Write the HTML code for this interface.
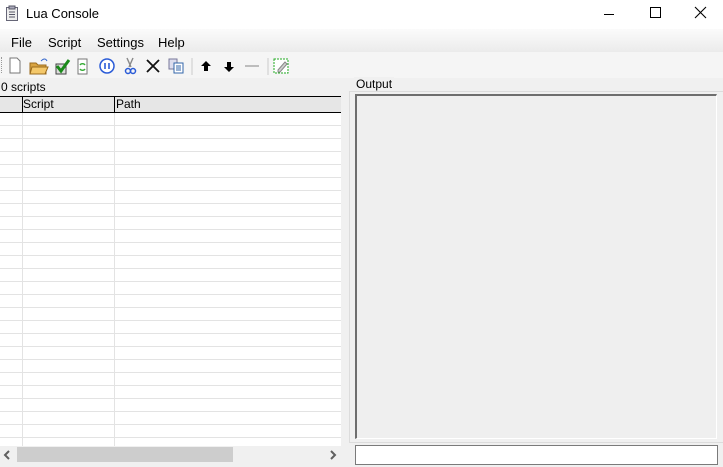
<!DOCTYPE html>
<html><head><meta charset="utf-8"><style>
*{margin:0;padding:0;box-sizing:border-box}
body{width:723px;height:467px;overflow:hidden;background:#f0f0f0;font-family:"Liberation Sans",Arial,sans-serif;font-size:12px;color:#000;position:relative}
.a{position:absolute}
</style></head><body>
<div class="a" style="left:0;top:0;width:723px;height:29px;background:#fff"></div>
<svg class="a" style="left:5px;top:5px" width="14" height="17" viewBox="0 0 14 17"><rect x="1.5" y="2.5" width="11" height="13" fill="#eee" stroke="#667"/><rect x="4" y="1" width="6" height="3" fill="#aab" stroke="#556"/><path d="M4 7h6M4 9.5h6M4 12h6" stroke="#556"/></svg>
<div class="a" style="left:26px;top:6px;font-size:13px">Lua Console</div>
<div class="a" style="left:604px;top:14px;width:10px;height:1px;background:#000"></div>
<div class="a" style="left:650px;top:7px;width:11px;height:11px;border:1px solid #000"></div>
<svg class="a" style="left:694px;top:6px" width="13" height="13"><path d="M1 1L12 12M12 1L1 12" stroke="#000" stroke-width="1.1"/></svg>
<div class="a" style="left:0;top:29px;width:723px;height:23px;background:linear-gradient(#fbfbfb,#f3f3f3 50%,#ebebeb)"></div>
<div class="a" style="left:11px;top:35px;font-size:13px">File</div>
<div class="a" style="left:48px;top:35px;font-size:13px">Script</div>
<div class="a" style="left:97px;top:35px;font-size:13px">Settings</div>
<div class="a" style="left:158px;top:35px;font-size:13px">Help</div>
<div class="a" style="left:0;top:52px;width:723px;height:26px;background:#f5f5f5"></div>
<div class="a" style="left:1px;top:57px;width:1px;height:16px;border-left:1px dotted #999"></div>
<svg class="a" style="left:0;top:55px" width="300" height="22" viewBox="0 0 300 22">
<path d="M10 3h7l3 3v12H10z" fill="#fff" stroke="#777"/>
<path d="M30 8h6l2 2h8v9H30z" fill="#d9a441" stroke="#9a6b1e"/><path d="M32 12h16l-3 7H30z" fill="#f4c86a" stroke="#9a6b1e"/><path d="M41 6q4-4 6 0" stroke="#36c" fill="none"/>
<rect x="56" y="9" width="10" height="10" fill="#ddd" stroke="#444"/><path d="M57 11l4 5 8-11" stroke="#1a8a1a" stroke-width="3" fill="none"/>
<path d="M79 4h8v15h-9V4z" fill="#fff" stroke="#777"/><path d="M80 10a3 3 0 0 1 5 0M85 14a3 3 0 0 1-5 0" stroke="#3a3" fill="none" stroke-width="1.4"/>
<circle cx="107" cy="11" r="7" fill="#fff" stroke="#2a5bd7" stroke-width="1.5"/><path d="M105 8v6M109 8v6" stroke="#2a5bd7" stroke-width="1.6"/>
<path d="M127 3l4 9M133 3l-4 9" stroke="#888" stroke-width="1.4"/><circle cx="128" cy="16" r="2.5" fill="none" stroke="#2a5bd7" stroke-width="1.5"/><circle cx="133" cy="16" r="2.5" fill="none" stroke="#2a5bd7" stroke-width="1.5"/>
<path d="M147 5l12 12M159 5l-12 12" stroke="#111" stroke-width="1.8"/>
<rect x="169" y="4" width="8" height="10" fill="#dde" stroke="#779"/><rect x="174" y="8" width="9" height="10" fill="#fff" stroke="#36a"/><path d="M176 11h5M176 13h5M176 15h5" stroke="#36a"/>
<path d="M192 3v17" stroke="#ccc"/>
<path d="M206 6l-5 5h3v5h4v-5h3z" fill="#000"/>
<path d="M229 17l-5-5h3V7h4v5h3z" fill="#000"/>
<path d="M245 11h14" stroke="#aaa" stroke-width="1.5"/>
<path d="M268 3v17" stroke="#ccc"/>
<rect x="274" y="4" width="14" height="14" fill="#fff" stroke="#2a2" stroke-dasharray="2,1"/><path d="M278 15l7-8 2 2-7 8h-2z" fill="#cfcfcf" stroke="#888"/>
</svg>
<div class="a" style="left:1px;top:80px">0 scripts</div>
<div class="a" style="left:0;top:96px;width:341px;height:350px;background:#fff;overflow:hidden;
background-image:linear-gradient(#e3e3e3 1px,transparent 1px);background-size:100% 13px;background-position:0 29px"></div>
<div class="a" style="left:22px;top:113px;width:1px;height:333px;background:#e3e3e3"></div>
<div class="a" style="left:114px;top:113px;width:1px;height:333px;background:#e3e3e3"></div>
<div class="a" style="left:0;top:96px;width:341px;height:17px;background:#e6e6e6;border-top:1px solid #000;border-bottom:1px solid #000"></div>
<div class="a" style="left:22px;top:97px;width:1px;height:15px;background:#000"></div>
<div class="a" style="left:114px;top:97px;width:1px;height:15px;background:#000"></div>
<div class="a" style="left:23px;top:97px">Script</div>
<div class="a" style="left:116px;top:97px">Path</div>
<div class="a" style="left:0;top:446px;width:341px;height:17px;background:#f0f0f0"></div>
<div class="a" style="left:17px;top:447px;width:216px;height:15px;background:#cdcdcd"></div>
<svg class="a" style="left:3px;top:450px" width="8" height="10"><path d="M6 1L2 5l4 4" stroke="#606060" stroke-width="2" fill="none"/></svg>
<svg class="a" style="left:329px;top:450px" width="8" height="10"><path d="M2 1l4 4-4 4" stroke="#606060" stroke-width="2" fill="none"/></svg>
<div class="a" style="left:349px;top:91px;width:374px;height:352px;border:1px solid #dcdcdc;border-right:none"></div>
<div class="a" style="left:354px;top:77px;padding:0 2px;background:#f0f0f0">Output</div>
<div class="a" style="left:355px;top:94px;width:362px;height:345px;border:1px solid #fff;border-top:2px solid #6e6e6e;border-left:2px solid #6e6e6e;background:#efefef"></div>
<div class="a" style="left:355px;top:445px;width:363px;height:20px;background:#fff;border:1px solid #7a7a7a"></div>
</body></html>
